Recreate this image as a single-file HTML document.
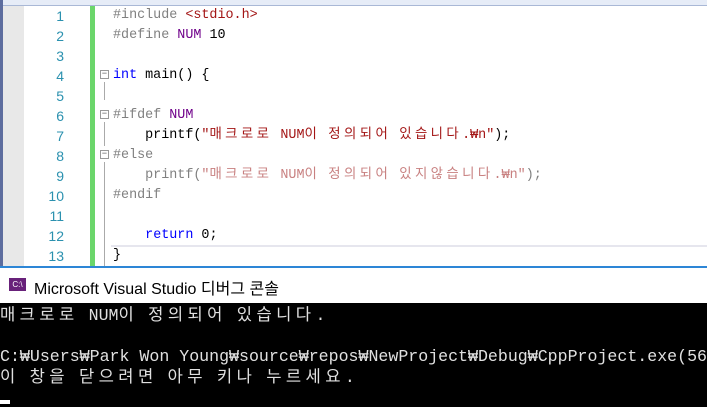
<!DOCTYPE html>
<html><head><meta charset="utf-8"><style>
body{margin:0;width:707px;height:407px;overflow:hidden;background:#fff;position:relative;font-family:"Liberation Mono","Noto Sans CJK KR",monospace}
.top{position:absolute;left:0;top:0;width:707px;height:5px;background:#e6ecf7;border-bottom:1px solid #a9b8d6}
.lb{position:absolute;left:0;top:0;width:3px;height:267px;background:#5d6d9e}
.gm{position:absolute;left:3px;top:6px;width:21px;height:261px;background:#e8e8e8}
.gr{position:absolute;left:90px;top:6px;width:5px;height:261px;background:#6bd66b}
.ln{position:absolute;left:24px;width:40px;text-align:right;color:#2b91af;font-size:14px;line-height:20px;font-family:"Liberation Sans",sans-serif}
.cd{position:absolute;left:113px;font-size:13.4px;line-height:20px;white-space:pre;color:#000}
.g{color:#808080}.r{color:#a31515}.p{color:#6f008a}.b{color:#0000ff}.lr{color:#c88080}
.k{letter-spacing:3.4px}
.kc{letter-spacing:4.4px}
.fold{position:absolute;left:100px;width:7px;height:7px;border:1px solid #999;background:#fff;font-size:9px;line-height:7px;text-align:center;color:#555}
.vl{position:absolute;left:104px;width:1px;background:#aaa}
.cur{position:absolute;left:111px;top:245px;width:596px;height:20px;border-top:2px solid #e6e6ee}
.bl{position:absolute;left:0;top:266px;width:707px;height:2px;background:#2d86d6}
.tt{position:absolute;left:0;top:268px;width:707px;height:35px;background:#fff;font-family:"Liberation Sans","Noto Sans CJK KR",sans-serif;font-size:16px}
.con{position:absolute;left:0;top:303px;width:707px;height:104px;background:#000;color:#e0e0e0;font-size:16.6px;line-height:20.5px;white-space:pre}
</style></head><body>
<div class="top"></div><div class="lb"></div><div class="gm"></div><div class="gr"></div>
<div class="cur"></div>
<div class="ln" style="top:6px">1<br>2<br>3<br>4<br>5<br>6<br>7<br>8<br>9<br>10<br>11<br>12<br>13</div>
<div class="vl" style="top:82px;height:18px"></div>
<div class="vl" style="top:122px;height:24px"></div>
<div class="vl" style="top:162px;height:24px"></div>
<div class="vl" style="top:186px;height:80px"></div>
<div class="fold" style="top:70px">−</div>
<div class="fold" style="top:110px">−</div>
<div class="fold" style="top:150px">−</div>
<div class="cd" style="top:6px"><span class="g">#include </span><span class="r">&lt;stdio.h&gt;</span>
<span class="g">#define </span><span class="p">NUM</span> 10

<span class="b">int</span> main() {

<span class="g">#ifdef </span><span class="p">NUM</span>
    printf(<span class="r">"<span class="k">매크로로</span> NUM<span class="k">이</span> <span class="k">정의되어</span> <span class="k">있습니다</span>.₩n"</span>);
<span class="g">#else</span>
<span class="g">    printf(</span><span class="lr">"<span class="k">매크로로</span> NUM<span class="k">이</span> <span class="k">정의되어</span> <span class="k">있지않습니다</span>.₩n"</span><span class="g">);</span>
<span class="g">#endif</span>

    <span class="b">return</span> 0;
}</div>
<div class="bl"></div>
<div class="tt"><div style="position:absolute;left:9px;top:10px;width:17px;height:13px;background:#68217a;color:#fff;font-size:8px;line-height:13px;text-align:center">C:\</div><div style="position:absolute;left:34px;top:7px">Microsoft Visual Studio 디버그 콘솔</div></div>
<div class="con"><div style="position:absolute;left:0;top:3px"><span class="kc">매크로로</span> NUM<span class="kc">이</span> <span class="kc">정의되어</span> <span class="kc">있습니다</span>.

C:₩Users₩Park Won Young₩source₩repos₩NewProject₩Debug₩CppProject.exe(5620
<span class="kc">이</span> <span class="kc">창을</span> <span class="kc">닫으려면</span> <span class="kc">아무</span> <span class="kc">키나</span> <span class="kc">누르세요</span>.</div><div style="position:absolute;left:0;top:97px;width:10px;height:4px;background:#fff"></div></div>
</body></html>
